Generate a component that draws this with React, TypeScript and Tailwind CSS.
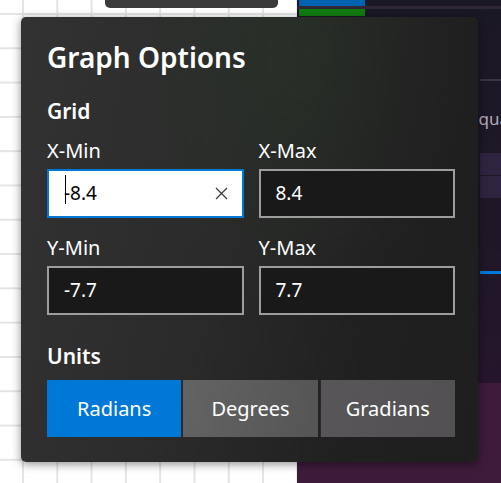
import React, { useState } from 'react';

type Unit = 'Radians' | 'Degrees' | 'Gradians';

interface FieldProps {
  label: string;
  value: string;
  focused?: boolean;
}

const ClearGlyph: React.FC = () => (
  <svg width="13" height="13" viewBox="0 0 13 13" fill="none" stroke="#3a3a3a" strokeWidth={1.2}>
    <path d="M1 1l11 11M12 1L1 12" />
  </svg>
);

const RangeField: React.FC<FieldProps> = ({ label, value, focused }) => (
  <div className="flex flex-col">
    <div className="h-[26px] text-[20px] leading-[26px] text-white">{label}</div>
    <div
      className={`mt-[5px] h-[49px] flex items-center border-2 pl-[15px] pr-[14px] text-[19px] ${
        focused ? 'border-[#0078d7] bg-white text-black' : 'border-[#9d9d9d] bg-[#1a191a] text-white'
      }`}
    >
      <div className="relative flex-1">
        {focused && <span className="absolute left-[1px] top-[-4px] h-[29px] w-px bg-black"></span>}
        {value}
      </div>
      {focused && <ClearGlyph />}
    </div>
  </div>
);

const App: React.FC = () => {
  const [unit, setUnit] = useState<Unit>('Radians');
  const units: Unit[] = ['Radians', 'Degrees', 'Gradians'];

  return (
    <div className="relative flex h-[483px] w-[501px] overflow-hidden font-['Noto_Sans',sans-serif]">
      {/* Graph canvas */}
      <div className="relative h-full w-[297px] shrink-0 bg-white bg-[linear-gradient(to_right,#e4e4e4_2px,transparent_2px),linear-gradient(to_bottom,#e4e4e4_2px,transparent_2px)] bg-[size:34.3px_34.3px] bg-[position:22px_13px]">
        <div className="absolute left-[105px] top-0 h-[8px] w-[173px] rounded-b-[5px] bg-[#3b3b3b]"></div>
      </div>

      {/* Function list side */}
      <div className="flex min-w-0 flex-1 flex-col overflow-hidden bg-[linear-gradient(to_bottom,#1b1826_0%,#1f1727_50%,#2a1430_100%)]">
        <div className="flex flex-col">
          <div className="ml-[2px] h-[6px] w-[66px] bg-[#0063b1]"></div>
          <div className="h-[3px] bg-[#2c2637]"></div>
          <div className="ml-[2px] h-[7px] w-[66px] bg-[#107c10]"></div>
        </div>
        <div className="ml-[183px] mt-[63px] h-[2px] bg-[#3a3247]"></div>
        <div className="ml-[172px] mt-[26px] whitespace-nowrap text-[17px] leading-[24px] text-[#b3adb8]">
          Equation
        </div>
        <div className="ml-[183px] mt-[22px] flex flex-col gap-px">
          <div className="h-[22px] bg-[#2f2440]"></div>
          <div className="h-[22px] bg-[#2f2440]"></div>
        </div>
        <div className="ml-[183px] mt-[73px] h-[3px] bg-[#0078d7]"></div>
        <div className="mt-[109px] flex-1 bg-[#3e1b3b]"></div>
      </div>

      {/* Graph Options flyout */}
      <div className="absolute left-[21px] top-[17px] h-[445px] w-[457px] overflow-hidden rounded-[5px] bg-[linear-gradient(100deg,#323232_0%,#2b2b2b_40%,#212021_75%,#1f1e1f_100%)] shadow-[0_2px_10px_rgba(0,0,0,0.45)]">
        <div className="relative flex h-full flex-col bg-[radial-gradient(ellipse_at_60%_8%,rgba(40,60,40,0.35),transparent_45%)] pl-[26px] pr-[23px] pt-[22px]">
          <h2 className="h-[36px] text-[28px] font-semibold leading-[36px] text-white">Graph Options</h2>

          <h3 className="mt-[22px] h-[28px] text-[21px] font-semibold leading-[28px] text-white">Grid</h3>

          <div className="mt-[13px] grid grid-cols-2 gap-x-[15px] gap-y-[17px]">
            <RangeField label="X-Min" value="-8.4" focused />
            <RangeField label="X-Max" value="8.4" />
            <RangeField label="Y-Min" value="-7.7" />
            <RangeField label="Y-Max" value="7.7" />
          </div>

          <h3 className="mt-[27px] h-[28px] text-[21px] font-semibold leading-[28px] text-white">Units</h3>

          <div className="mt-[10px] flex h-[57px] gap-[2px]">
            {units.map((u) => (
              <button
                key={u}
                onClick={() => setUnit(u)}
                className={`flex-1 text-[20px] text-white ${
                  unit === u
                    ? 'bg-[#0078d7]'
                    : u === 'Degrees'
                    ? 'bg-[linear-gradient(100deg,#636363,#555555)]'
                    : 'bg-[linear-gradient(100deg,#585658,#525052)] border-l border-[#2a282a]'
                }`}
              >
                {u}
              </button>
            ))}
          </div>
        </div>
      </div>
    </div>
  );
};

export default App;
